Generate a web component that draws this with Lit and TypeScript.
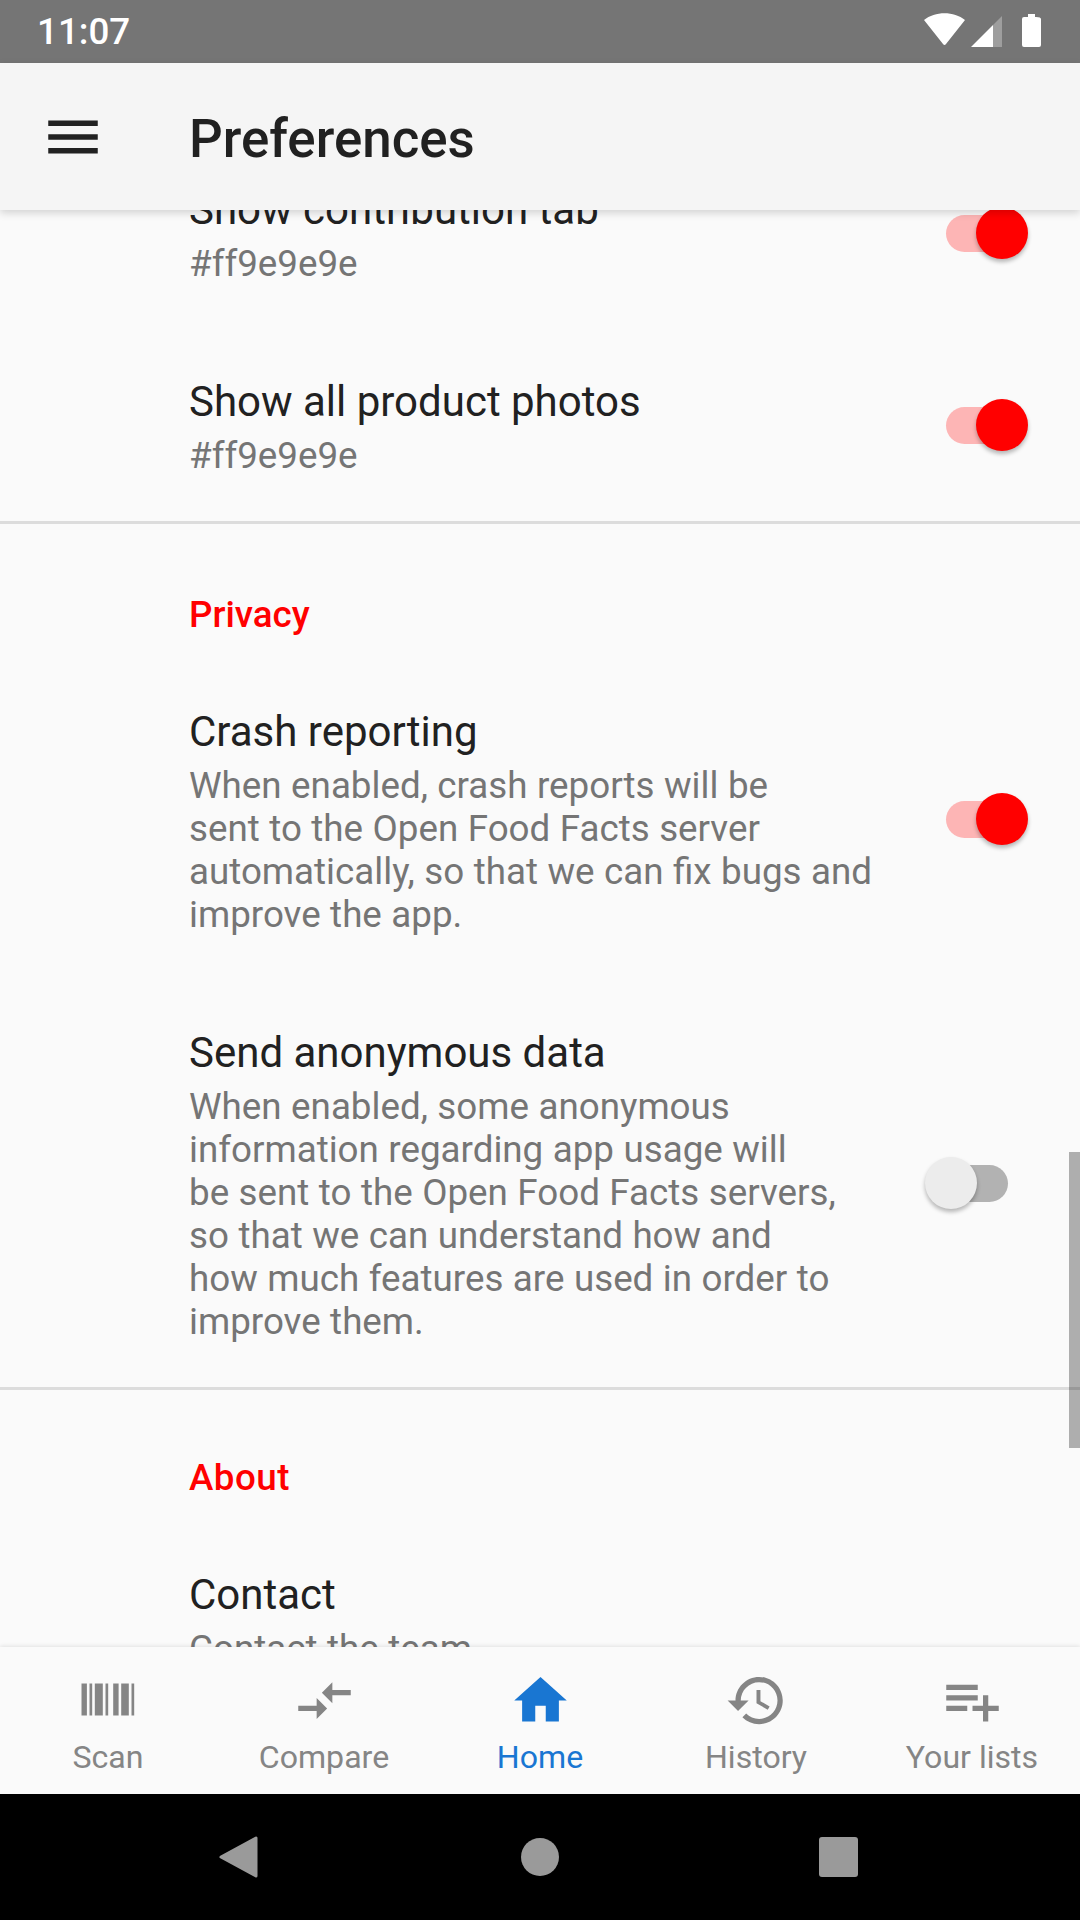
import { LitElement, html, css, svg } from "lit";
import { customElement } from "lit/decorators.js";

interface Row { title: string; lines: string[]; on: boolean; }

const icon = (d: string) => html`<svg class="nav-icon" viewBox="0 0 24 24"><path d="${d}"></path></svg>`;

const barcode = html`<svg class="nav-icon" viewBox="0 0 63 63">
  ${[[4.5, 5.4], [12.5, 2.7], [17.8, 8], [28.5, 2.7], [36.2, 5.4], [44.2, 7.6], [54.5, 2.7]].map(
    ([x, w]) => svg`<rect x="${x}" y="14.5" width="${w}" height="32"></rect>`
  )}
</svg>`;

@customElement("app-root")
export class AppRoot extends LitElement {
  static styles = css`
    :host { display: block; width: 1080px; height: 1920px; font-family: Roboto, "Noto Sans", sans-serif; background: #fafafa; }
    .screen { height: 1920px; display: flex; flex-direction: column; position: relative; overflow: hidden; }

    .status { height: 63px; flex: none; background: #757575; display: flex; align-items: center; justify-content: space-between; padding: 0 39px 0 37px; color: #fff; font-size: 36.75px; font-weight: 500; box-sizing: border-box; }
    .status-icons { display: flex; align-items: center; }
    .status-icons svg { display: block; height: 63px; width: 117px; }

    .appbar { height: 147px; flex: none; background: #f5f5f5; display: flex; align-items: center; padding-left: 40px; gap: 83px; box-shadow: 0 3px 8px rgba(0,0,0,.16); position: relative; z-index: 2; }
    .appbar svg { width: 66px; height: 66px; fill: #212121; display: block; }
    .appbar h1 { margin: 0; font-size: 52.9px; font-weight: 500; color: #212121; line-height: 63px; position: relative; top: 3px; }

    .content { flex: 1; min-height: 0; overflow: hidden; position: relative; }
    .list { margin-top: -66px; }
    .row { display: flex; align-items: center; padding: 42px 0 42px 189px; margin-bottom: 9px; }
    .row.last { margin-bottom: 2px; }
    .text { flex: 1; min-width: 0; }
    .title { font-size: 42px; line-height: 48px; color: #212121; margin-bottom: 8px; }
    .sum { font-size: 36.75px; line-height: 43px; color: #757575; word-spacing: .35px; }
    .divider { height: 3px; background: #dcdcdc; }
    .section { font-size: 36.75px; font-weight: 500; line-height: 43px; color: #f00; padding: 69px 0 30px 189px; }
    .section.tight { padding-top: 66px; letter-spacing: .5px; }

    .switch { flex: none; width: 103px; height: 52px; margin: 0 52px 6px 0; position: relative; }
    .track { position: absolute; left: 21px; right: 20px; top: 8px; height: 37px; border-radius: 19px; background: #b2b2b2; }
    .thumb { position: absolute; left: 0; top: 0; width: 52px; height: 52px; border-radius: 50%; background: #ececec; box-shadow: 0 3px 4px rgba(0,0,0,.28); }
    .switch.on .track { background: #fdb5b5; }
    .switch.on .thumb { left: auto; right: 0; background: #f00; }

    .scrollbar { position: absolute; right: 0; top: 942px; width: 11px; height: 296px; background: rgba(0,0,0,.3); }

    .bottom { height: 147px; flex: none; background: #fafafa; display: flex; box-shadow: 0 -1px 4px rgba(0,0,0,.1); position: relative; z-index: 2; }
    .tab { flex: 1; display: flex; flex-direction: column; align-items: center; padding-top: 22px; color: #858585; fill: #858585; font-size: 32.1px; line-height: 37px; }
    .tab.active { color: #1976d2; fill: #1976d2; }
    .nav-icon { width: 63px; height: 63px; display: block; margin-bottom: 7px; }

    .sysnav { height: 126px; flex: none; background: #000; display: flex; justify-content: center; align-items: center; }
    .sysnav div { width: 300px; display: flex; justify-content: center; }
    .sysnav svg { display: block; width: 44px; height: 44px; fill: #9a9a9a; }
  `;

  private rowsTop: Row[] = [
    { title: "Show contribution tab", lines: ["#ff9e9e9e"], on: true },
    { title: "Show all product photos", lines: ["#ff9e9e9e"], on: true },
  ];
  private rowsPrivacy: Row[] = [
    {
      title: "Crash reporting",
      lines: ["When enabled, crash reports will be", "sent to the Open Food Facts server", "automatically, so that we can fix bugs and", "improve the app."],
      on: true,
    },
    {
      title: "Send anonymous data",
      lines: ["When enabled, some anonymous", "information regarding app usage will", "be sent to the Open Food Facts servers,", "so that we can understand how and", "how much features are used in order to", "improve them."],
      on: false,
    },
  ];

  private row(r: Row, last = false) {
    return html`<div class="row ${last ? "last" : ""}">
      <div class="text">
        <div class="title">${r.title}</div>
        ${r.lines.map((l) => html`<div class="sum">${l}</div>`)}
      </div>
      <div class="switch ${r.on ? "on" : ""}"><div class="track"></div><div class="thumb"></div></div>
    </div>`;
  }

  render() {
    return html`<div class="screen">
      <div class="status">
        <span>11:07</span>
        <div class="status-icons">
          <svg viewBox="0 0 117 63">
            <path fill="#fff" d="M0 20 C11 11 30 11 41 20 L22 44 Q20.500 46 19 44 Z"></path>
            <path fill="#fff" d="M47 47 L69 25 V47 Z"></path>
            <path fill="#fff" fill-opacity=".3" d="M69 25 L78 16 V47 H69 Z"></path>
            <path fill="#fff" d="M104 14 V17 H112 Q117 17 117 19 V45 Q117 47 115 47 H100 Q98 47 98 45 V19 Q98 17 100 17 H104 Z M104 14 H111 V17 H104 Z"></path>
          </svg>
        </div>
      </div>
      <div class="appbar">
        <svg viewBox="0 0 24 24"><path d="M3 18h18v-2H3v2zm0-5h18v-2H3v2zm0-7v2h18V6H3z"></path></svg>
        <h1>Preferences</h1>
      </div>
      <div class="content">
        <div class="list">
          ${this.row(this.rowsTop[0])}
          ${this.row(this.rowsTop[1], true)}
          <div class="divider"></div>
          <div class="section">Privacy</div>
          ${this.row(this.rowsPrivacy[0])}
          ${this.row(this.rowsPrivacy[1], true)}
          <div class="divider"></div>
          <div class="section tight">About</div>
          <div class="row"><div class="text"><div class="title">Contact</div><div class="sum">Contact the team</div></div></div>
        </div>
        <div class="scrollbar"></div>
      </div>
      <div class="bottom">
        <div class="tab">${barcode}<span>Scan</span></div>
        <div class="tab">${icon("M9.01 14H2v2h7.01v3L13 15l-3.99-4v3zm5.98-1v-3H22V8h-7.01V5L11 9l3.99 4z")}<span>Compare</span></div>
        <div class="tab active">${icon("M10 20v-6h4v6h5v-8h3L12 3 2 12h3v8z")}<span>Home</span></div>
        <div class="tab">${icon("M13 3c-4.97 0-9 4.03-9 9H1l3.89 3.89.07.14L9 12H6c0-3.87 3.13-7 7-7s7 3.13 7 7-3.13 7-7 7c-1.93 0-3.68-.79-4.94-2.06l-1.42 1.42C8.27 19.99 10.51 21 13 21c4.97 0 9-4.03 9-9s-4.03-9-9-9zm-1 5v5l4.28 2.54.72-1.21-3.5-2.08V8H12z")}<span>History</span></div>
        <div class="tab">${icon("M14 10H2v2h12v-2zm0-4H2v2h12V6zm4 8v-4h-2v4h-4v2h4v4h2v-4h4v-2h-4zM2 16h8v-2H2v2z")}<span>Your lists</span></div>
      </div>
      <div class="sysnav">
        <div><svg viewBox="0 0 44 44"><path stroke="#9a9a9a" stroke-width="3" stroke-linejoin="round" d="M38 3 V41 L3 22 Z"></path></svg></div>
        <div><svg viewBox="0 0 44 44"><circle cx="22" cy="22" r="19"></circle></svg></div>
        <div><svg viewBox="0 0 44 44"><rect x="1" y="2" width="39" height="40" rx="3"></rect></svg></div>
      </div>
    </div>`;
  }
}
